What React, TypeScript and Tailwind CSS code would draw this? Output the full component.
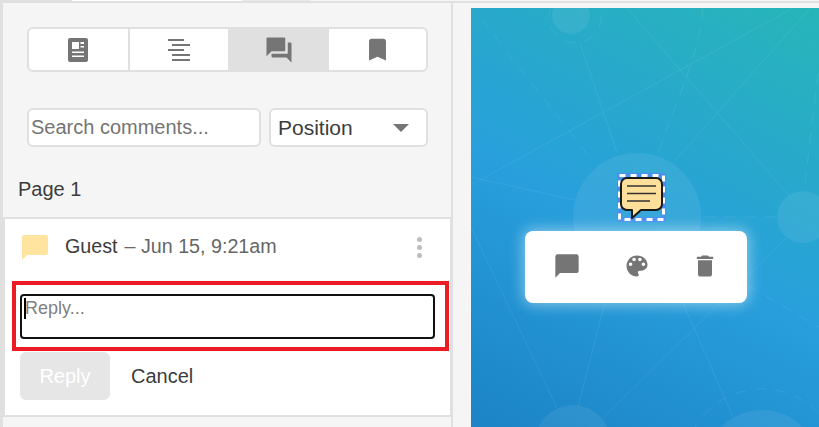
import React from 'react';

const Icon = ({ d, size = 28, className = '' }: { d: string; size?: number; className?: string }) => (
  <svg width={size} height={size} viewBox="0 0 24 24" fill="currentColor" className={className}>
    <path d={d} />
  </svg>
);

const ANSWER = 'M21 6h-2v9H6v2c0 .55.45 1 1 1h11l4 4V7c0-.55-.45-1-1-1zm-4 6V3c0-.55-.45-1-1-1H3c-.55 0-1 .45-1 1v14l4-4h10c.55 0 1-.45 1-1z';
const BOOKMARK = 'M17 3H7c-1.1 0-1.99.9-1.99 2L5 21l7-3 7 3V5c0-1.1-.9-2-2-2z';
const CHAT = 'M20 2H4c-1.1 0-2 .9-2 2v18l4-4h14c1.1 0 2-.9 2-2V4c0-1.1-.9-2-2-2z';
const PALETTE = 'M12 3c-4.97 0-9 4.03-9 9s4.03 9 9 9c.83 0 1.5-.67 1.5-1.5 0-.39-.15-.74-.39-1.01-.23-.26-.38-.61-.38-.99 0-.83.67-1.5 1.5-1.5H16c2.76 0 5-2.24 5-5 0-4.42-4.03-8-9-8zm-5.5 9c-.83 0-1.5-.67-1.5-1.5S5.67 9 6.5 9 8 9.67 8 10.5 7.33 12 6.5 12zm3-4C8.67 8 8 7.33 8 6.5S8.67 5 9.5 5s1.5.67 1.5 1.5S10.33 8 9.5 8zm5 0c-.83 0-1.5-.67-1.5-1.5S13.67 5 14.5 5s1.5.67 1.5 1.5S15.33 8 14.5 8zm3 4c-.83 0-1.5-.67-1.5-1.5S16.67 9 17.5 9s1.5.67 1.5 1.5-.67 1.5-1.5 1.5z';
const TRASH = 'M6 19c0 1.1.9 2 2 2h8c1.1 0 2-.9 2-2V7H6v12zM19 4h-3.5l-1-1h-5l-1 1H5v2h14V4z';

const ThumbIcon = () => (
  <svg width="20" height="24" viewBox="0 0 20 24">
    <path
      fill="#757575"
      fillRule="evenodd"
      d="M2 0h16a2 2 0 0 1 2 2v20a2 2 0 0 1-2 2H2a2 2 0 0 1-2-2V2a2 2 0 0 1 2-2zM4 4v7h7V4H4zm8.500 0v2H16V4h-3.500zm0 4v1.500H16V8h-3.500zM4 13.500V15h12v-1.500H4zm0 4V19h12v-1.500H4z"
    />
  </svg>
);

const AlignIcon = () => (
  <svg width="22" height="22" viewBox="0 0 22 22" fill="#757575">
    <rect x="0" y="0" width="16" height="2" />
    <rect x="4" y="5" width="18" height="2" />
    <rect x="0" y="10" width="16" height="2" />
    <rect x="4" y="15" width="18" height="2" />
    <rect x="4" y="20" width="18" height="2" />
  </svg>
);

const Backdrop = () => (
  <svg width="348" height="419" viewBox="0 0 348 419" className="absolute inset-0" fill="none">
    <g fill="#ffffff" fillOpacity="0.07">
      <circle cx="100" cy="7" r="19" />
      <circle cx="166" cy="209" r="64" />
      <circle cx="332" cy="209" r="26" />
      <circle cx="102" cy="435" r="38" />
      <circle cx="291" cy="459" r="57" />
    </g>
    <g stroke="#ffffff" strokeOpacity="0.075" strokeWidth="1">
      <path d="M156 0L319 189" />
      <path d="M339 0L202 155" />
      <path d="M322 0L0 177" />
      <path d="M109 35L146 145" />
      <path d="M0 169L104 192" />
      <path d="M0 219L86 400" />
      <path d="M134 294L107 399" />
      <path d="M212 295L262 409" />
      <path d="M316 229L132 410" />
    </g>
    <g stroke="#ffffff" strokeOpacity="0.08" strokeWidth="1" strokeDasharray="11 9">
      <circle cx="104" cy="9" r="26" />
      <circle cx="291" cy="459" r="78" />
      <path d="M11 12L121 152" />
      <path d="M232 0C226 60 200 100 186 149" />
      <path d="M234 209H306" />
      <path d="M276 277L348 319" />
      <path d="M347 65L334 175" />
    </g>
  </svg>
);

export default function App() {
  return (
    <div className="w-[819px] h-[427px] overflow-hidden flex flex-col bg-[#f5f5f5] text-[20px] text-[#3c3c3c] font-['Liberation_Sans',Arial,sans-serif]">
      <div className="h-[3px] shrink-0 flex flex-col">
        <div className="h-px flex bg-[#f5f5f5]">
          <div className="w-[72px] bg-[#e0e0e0]" />
          <div className="w-[170px] bg-white" />
          <div className="w-[68px] bg-[#e8e8e8]" />
        </div>
        <div className="h-[2px] bg-[#e0e0e0]" />
      </div>

      <div className="flex flex-1 min-h-0">
        <aside className="relative w-[453px] shrink-0 border-l-[3px] border-r-[2px] border-[#e0e0e0] pt-[24px]">
          <div className="ml-6 mr-[23px] h-[45px] flex rounded-[6px] border-2 border-[#e0e0e0] bg-white overflow-hidden text-[#757575]">
            <div className="w-[101px] pr-[2px] flex items-center justify-center border-r-2 border-[#e0e0e0]">
              <ThumbIcon />
            </div>
            <div className="w-[98px] flex items-center justify-center">
              <AlignIcon />
            </div>
            <div className="w-[101px] flex items-center justify-center bg-[#e0e0e0]">
              <Icon d={ANSWER} size={30} />
            </div>
            <div className="flex-1 flex items-center justify-center">
              <Icon d={BOOKMARK} size={29} />
            </div>
          </div>

          <div className="ml-6 mr-[23px] mt-[36px] flex gap-2">
            <input
              placeholder="Search comments..."
              className="w-[234px] h-[39px] rounded-[6px] border-2 border-[#e0e0e0] bg-white px-[2px] outline-none placeholder:text-[#757575]"
            />
            <div className="flex-1 h-[39px] rounded-[6px] border-2 border-[#e0e0e0] bg-white flex items-center justify-between pl-[7px] pr-[17px]">
              <span className="text-[21px]">Position</span>
              <span className="w-0 h-0 border-x-[8px] border-t-[8px] border-x-transparent border-t-[#757575]" />
            </div>
          </div>

          <div className="ml-[15px] mt-[32px] leading-[21px]">Page 1</div>

          <div className="w-[449px] mt-[17px] h-[200px] border-2 border-[#e0e0e0] bg-white">
            <div className="h-[56px] flex items-center pl-[17px] pr-[28px] text-[19.7px]">
              <svg width="26" height="25" viewBox="0 0 26 25" className="mr-[17px]">
                <path fill="#ffe4a0" d="M2 0h22a2 2 0 0 1 2 2v16a2 2 0 0 1-2 2H5l-5 5V2a2 2 0 0 1 2-2z" />
              </svg>
              <span>Guest</span>
              <span className="ml-[7px] text-[#666]">– Jun 15, 9:21am</span>
              <span className="ml-auto flex flex-col gap-[3px]">
                <i className="block w-[5px] h-[5px] rounded-full bg-[#bdbdbd]" />
                <i className="block w-[5px] h-[5px] rounded-full bg-[#bdbdbd]" />
                <i className="block w-[5px] h-[5px] rounded-full bg-[#bdbdbd]" />
              </span>
            </div>
            <div className="relative mx-[15px] mt-[19px] h-[45px]">
              <textarea
                placeholder="Reply..."
                className="block w-full h-full resize-none rounded-[4px] border-2 border-[#111] bg-white pl-[3px] pt-0 text-[18px] leading-[24px] outline-none placeholder:text-[#808080]"
              />
              <span className="absolute left-[4px] top-[4px] w-[2px] h-[21px] bg-black" />
            </div>
            <div className="mx-[15px] mt-[13px] flex items-center">
              <div className="w-[90px] h-[48px] rounded-[6px] bg-[#e6e6e6] text-white flex items-center justify-center">Reply</div>
              <span className="ml-[21px]">Cancel</span>
            </div>
          </div>

          <div className="absolute left-[9px] top-[278px] w-[437px] h-[70px] border-[4px] border-[#ed1c24]" />
        </aside>

        <main className="flex-1 pl-[18px] pt-[5px]">
          <div className="relative w-[348px] h-[419px] overflow-hidden bg-[linear-gradient(27deg,#1b83c6_0%,#289fdc_46%,#27b5b8_100%)]">
            <Backdrop />
            <svg width="49" height="49" viewBox="0 0 49 49" fill="none" className="absolute left-[146px] top-[165px]">
              <rect x="2.500" y="2.500" width="44" height="44" stroke="#4a8ff0" strokeWidth="5" />
              <rect x="2.500" y="2.500" width="44" height="44" stroke="#ffffff" strokeWidth="3" strokeDasharray="6 5" />
              <path
                fill="#ffe09a"
                stroke="#1a1a1a"
                strokeWidth="2"
                strokeLinejoin="round"
                d="M10 5h29a6 6 0 0 1 6 6v20a6 6 0 0 1-6 6H24l-9 8v-8h-5a6 6 0 0 1-6-6V11a6 6 0 0 1 6-6z"
              />
              <path stroke="#333" strokeWidth="1.500" d="M10 13h29M10 20.500h29M10 28h23" />
            </svg>
            <div className="absolute left-[54px] top-[223px] w-[222px] h-[72px] rounded-[8px] bg-white shadow-[0_0_14px_2px_rgba(255,255,255,0.45)] text-[#757575] flex items-center pl-[28px] pb-[2px]">
              <Icon d={CHAT} size={28} />
              <Icon d={PALETTE} size={28} className="ml-[42px]" />
              <Icon d={TRASH} size={28} className="ml-[40px]" />
            </div>
          </div>
        </main>
      </div>
    </div>
  );
}
